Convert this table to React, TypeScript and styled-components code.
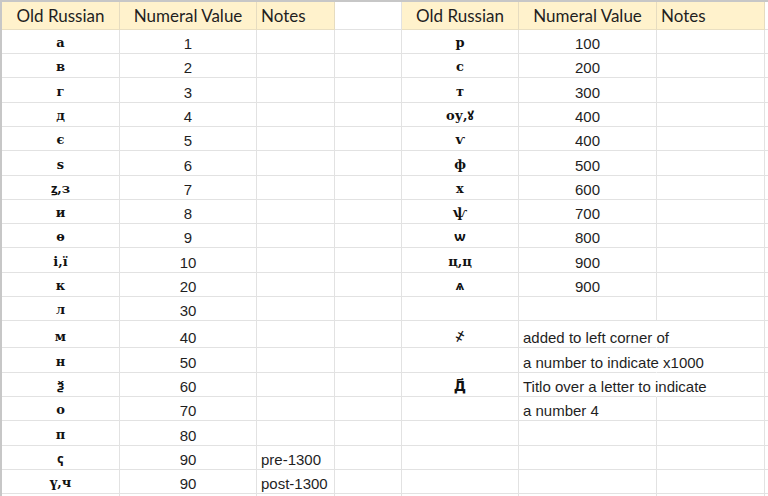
import React from "react";
import styled, { createGlobalStyle } from "styled-components";

const GlobalStyle = createGlobalStyle`
  html, body { margin: 0; padding: 0; background: #ffffff; }
  body { width: 768px; height: 496px; overflow: hidden; }
`;

const ROW_HEIGHTS = [28, 24, 24, 25, 24, 24, 25, 24, 24, 24, 25, 24, 24, 27, 25, 24, 24, 25, 24, 24, 24];

const Sheet = styled.div`
  display: grid;
  grid-template-columns: 118px 137px 78px 67px 117px 138px 108px 60px;
  grid-template-rows: ${ROW_HEIGHTS.map((h) => `${h}px`).join(" ")};
  border-left: 2px solid #c7c7c7;
  border-top: 2px solid #c7c7c7;
  width: 766px;
  overflow: hidden;
`;

type CellProps = {
  $header?: boolean;
  $align?: "left" | "center";
  $glyph?: boolean;
  $big?: boolean;
  $spill?: boolean;
};

const Cell = styled.div<CellProps>`
  box-sizing: border-box;
  display: flex;
  align-items: flex-end;
  justify-content: ${(p) => (p.$align === "center" ? "center" : "flex-start")};
  padding-left: ${(p) => (p.$align === "center" ? "0" : "4px")};
  padding-right: ${(p) => (p.$align === "center" ? "0" : "4px")};
  padding-bottom: ${(p) => (p.$header ? "2px" : p.$glyph ? "2px" : "1px")};
  border-right: 1px solid ${(p) => (p.$spill ? "transparent" : p.$header ? "#e6dcc0" : "#e2e2e2")};
  border-bottom: 1px solid ${(p) => (p.$header ? "#e9dfc2" : "#e2e2e2")};
  background: ${(p) => (p.$header ? "#fff2cc" : "transparent")};
  color: ${(p) => (p.$glyph ? "#111111" : "#1f1f1f")};
  white-space: nowrap;
  overflow: visible;
  font-family: ${(p) =>
    p.$header
      ? '"Lato", "Open Sans", sans-serif'
      : p.$glyph
      ? '"DejaVu Serif", "Noto Sans", serif'
      : '"Liberation Sans", Arial, sans-serif'};
  font-size: ${(p) => (p.$header ? "17px" : p.$big ? "17px" : p.$glyph ? "13px" : "15px")};
  font-weight: ${(p) => (p.$glyph ? 700 : 400)};
  line-height: ${(p) => (p.$header ? "22px" : "17px")};
`;

type Row = {
  a?: string;
  b?: string;
  c?: string;
  e?: string;
  eBig?: boolean;
  f?: string;
  fAlign?: "left" | "center";
  fSpill?: boolean;
};

const rows: Row[] = [
  { a: "а", b: "1", e: "р", f: "100" },
  { a: "в", b: "2", e: "с", f: "200" },
  { a: "г", b: "3", e: "т", f: "300" },
  { a: "д", b: "4", e: "оу,ꙋ", f: "400" },
  { a: "є", b: "5", e: "ѵ", f: "400" },
  { a: "ѕ", b: "6", e: "ф", f: "500" },
  { a: "ꙁ,з", b: "7", e: "х", f: "600" },
  { a: "и", b: "8", e: "ѱ", f: "700" },
  { a: "ѳ", b: "9", e: "ѡ", f: "800" },
  { a: "і,ї", b: "10", e: "ц,ц", f: "900" },
  { a: "к", b: "20", e: "ѧ", f: "900" },
  { a: "л", b: "30" },
  { a: "м", b: "40", e: "҂", eBig: true, f: "added to left corner of", fAlign: "left", fSpill: true },
  { a: "н", b: "50", f: "a number to indicate x1000", fAlign: "left", fSpill: true },
  { a: "ѯ", b: "60", e: "д҃", eBig: true, f: "Titlo over a letter to indicate", fAlign: "left", fSpill: true },
  { a: "о", b: "70", f: "a number 4", fAlign: "left" },
  { a: "п", b: "80" },
  { a: "ҁ", b: "90", c: "pre-1300" },
  { a: "ү,ч", b: "90", c: "post-1300" },
  {},
];

export default function App() {
  return (
    <>
      <GlobalStyle />
      <Sheet>
        <Cell $header $align="center">Old Russian</Cell>
        <Cell $header $align="center">Numeral Value</Cell>
        <Cell $header>Notes</Cell>
        <Cell />
        <Cell $header $align="center">Old Russian</Cell>
        <Cell $header $align="center">Numeral Value</Cell>
        <Cell $header>Notes</Cell>
        <Cell />
        {rows.map((r, i) => (
          <React.Fragment key={i}>
            <Cell $glyph $align="center">{r.a}</Cell>
            <Cell $align="center">{r.b}</Cell>
            <Cell>{r.c}</Cell>
            <Cell />
            <Cell $glyph $big={r.eBig} $align="center">{r.e}</Cell>
            <Cell $align={r.fAlign ?? "center"} $spill={r.fSpill}>{r.f}</Cell>
            <Cell />
            <Cell />
          </React.Fragment>
        ))}
      </Sheet>
    </>
  );
}
